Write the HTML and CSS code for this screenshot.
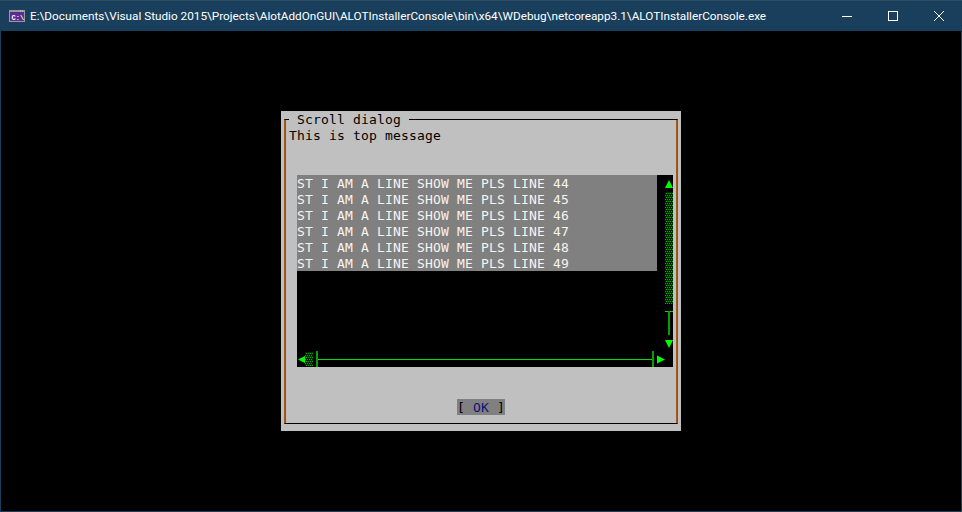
FILE: index.html
```html
<!DOCTYPE html>
<html lang="en">
<head>
<meta charset="utf-8">
<title>ALOTInstallerConsole</title>
<link rel="stylesheet" href="styles.css">
</head>
<body>
<div class="window">
  <header class="titlebar">
    <svg class="app-icon" width="16" height="12" viewBox="0 0 16 12">
      <rect x="0" y="0" width="16" height="12" fill="#9a9a9a"/>
      <rect x="1" y="2" width="14" height="9" fill="#5c2d91"/>
      <rect x="11" y="0.5" width="1" height="1" fill="#dcdcdc"/>
      <rect x="13" y="0.5" width="1" height="1" fill="#dcdcdc"/>
      <text x="2.5" y="9.5" class="app-icon-text">C:\</text>
    </svg>
    <span class="title">E:\Documents\Visual Studio 2015\Projects\AlotAddOnGUI\ALOTInstallerConsole\bin\x64\WDebug\netcoreapp3.1\ALOTInstallerConsole.exe</span>
    <div class="controls">
      <svg class="control" width="46" height="30" viewBox="0 0 46 30"><path d="M18 15.5h10" stroke="#fff" fill="none"/></svg>
      <svg class="control" width="46" height="30" viewBox="0 0 46 30"><rect x="18.5" y="10.5" width="9" height="9" stroke="#fff" fill="none"/></svg>
      <svg class="control" width="46" height="30" viewBox="0 0 46 30"><path d="M18 10l10 10M28 10l-10 10" stroke="#fff" fill="none"/></svg>
    </div>
  </header>
  <main class="terminal">
    <section class="dialog">
      <div class="frame">
        <div class="legend"><span class="legend-text">Scroll dialog</span></div>
        <p class="message">This is top message</p>
        <div class="viewer">
          <div class="lines">
            <div class="line">ST I AM A LINE SHOW ME PLS LINE 44</div>
            <div class="line">ST I AM A LINE SHOW ME PLS LINE 45</div>
            <div class="line">ST I AM A LINE SHOW ME PLS LINE 46</div>
            <div class="line">ST I AM A LINE SHOW ME PLS LINE 47</div>
            <div class="line">ST I AM A LINE SHOW ME PLS LINE 48</div>
            <div class="line">ST I AM A LINE SHOW ME PLS LINE 49</div>
          </div>
          <svg class="scrollbars" width="376" height="192" viewBox="0 0 376 192">
            <defs>
              <pattern id="stipple" width="4" height="4" patternUnits="userSpaceOnUse">
                <rect x="0" y="0" width="4" height="4" fill="#002800"/>
                <rect x="0" y="0" width="1" height="1" fill="#00b000"/>
                <rect x="2" y="0" width="1" height="1" fill="#00a000"/>
                <rect x="1" y="2" width="1" height="1" fill="#00b000"/>
                <rect x="3" y="2" width="1" height="1" fill="#00a000"/>
              </pattern>
            </defs>
            <path d="M372 5l4 8h-8z" fill="#00ff00"/>
            <rect x="368" y="17" width="8" height="112" fill="url(#stipple)" shape-rendering="crispEdges"/>
            <rect x="368" y="136" width="8" height="1" fill="#00e000"/>
            <rect x="371" y="136" width="2" height="24" fill="#00a000"/>
            <path d="M372 173l-4-8h8z" fill="#00ff00"/>
            <path d="M1 184.500l8-4v8z" fill="#00ff00"/>
            <rect x="8" y="177" width="8" height="14" fill="url(#stipple)" shape-rendering="crispEdges"/>
            <rect x="19" y="176" width="2" height="16" fill="#00a000"/>
            <rect x="21" y="184" width="334" height="1" fill="#00e000"/>
            <rect x="355" y="176" width="2" height="16" fill="#00a000"/>
            <path d="M368 184.500l-8-4v8z" fill="#00ff00"/>
          </svg>
        </div>
        <div class="actions"><button class="ok" type="button">[ <span class="ok-label">OK</span> ]</button></div>
      </div>
    </section>
  </main>
</div>
</body>
</html>
```
FILE: styles.css
```css
* { box-sizing: border-box; }
html, body { margin: 0; height: 100%; background: #000; }
.window {
  width: 962px; height: 512px; display: flex; flex-direction: column;
  border: 1px solid #1a3f5c; border-top: 0;
}
.titlebar {
  height: 31px; flex: none; display: flex; align-items: center;
  background: #1a3f5c; color: #fff; margin: 0 -1px;
  border-top: 1px solid #2f4f66;
}
.app-icon { margin-left: 9px; flex: none; }
.app-icon-text { font: bold 7px "Liberation Mono", monospace; fill: #fff; }
.title {
  margin-left: 5px; flex: 1; white-space: nowrap; overflow: hidden;
  font: 11.75px Roboto, sans-serif;
}
.controls { display: flex; flex: none; }
.control { display: block; }
.terminal {
  flex: 1; background: #000; display: flex; justify-content: center; align-items: flex-start;
  padding-top: 80px;
}
.dialog {
  width: 400px; height: 320px; padding: 8px 3px 7px 3px; background: #c0c0c0;
  font: 13px/16px "DejaVu Sans Mono", monospace; letter-spacing: 0.17px; color: #000;
}
.frame {
  height: 100%; position: relative; padding: 7px 0 0 4px;
  border-top: 1px solid #000; border-bottom: 1px solid #000;
  border-left: 1px solid #a5591c; border-right: 1px solid #1c6fb0;
  box-shadow: inset 1px 0 0 #1c6fb0, inset -1px 0 0 #a5591c;
}
.legend {
  position: absolute; left: 4px; top: -8px; height: 16px; padding: 0 5px;
  background: #c0c0c0; line-height: 16px;
}
.legend-text { padding: 0 3px; }
.message { margin: 0; height: 48px; padding-top: 1px; }
.viewer {
  position: relative; margin-left: 8px; width: 376px; height: 192px; background: #000;
}
.lines { width: 360px; background: #808080; color: #f8f4ee; }
.line { height: 16px; padding-top: 1px; white-space: nowrap; }
.scrollbars { position: absolute; left: 0; top: 0; }
.actions { margin-top: 32px; display: flex; justify-content: center; padding-right: 4px; }
.ok {
  width: 48px; height: 16px; padding: 1px 0 0; border: 0; background: #808080; color: #000;
  font: inherit; letter-spacing: inherit; white-space: pre; text-align: center;
}
.ok-label { color: #10107a; }
```
